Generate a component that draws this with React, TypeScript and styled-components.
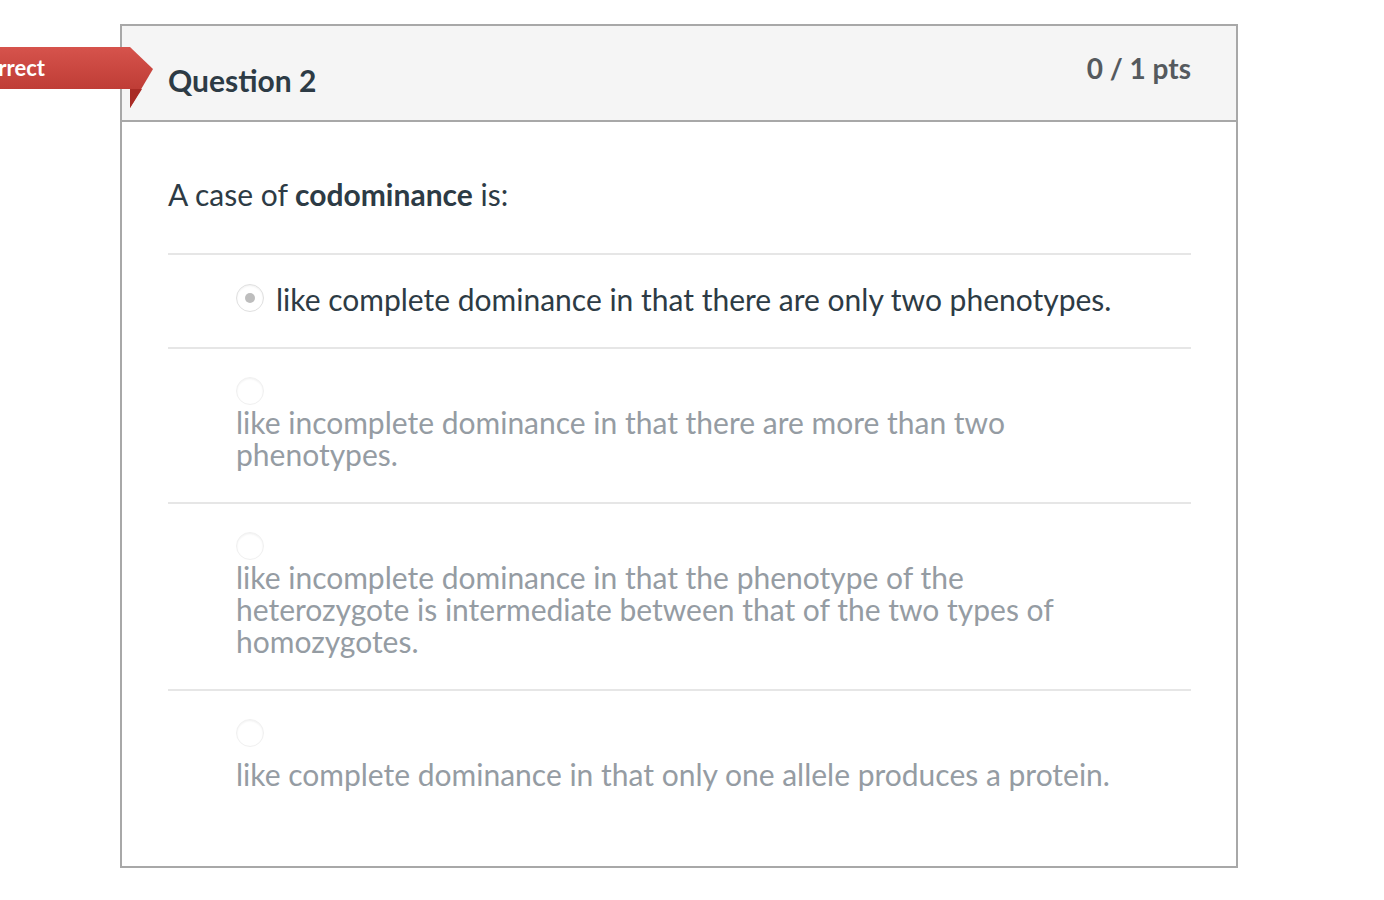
import React from "react";
import styled, { createGlobalStyle } from "styled-components";

const Global = createGlobalStyle`
  html, body { margin: 0; padding: 0; background: #ffffff; }
  body { font-family: Lato, "Open Sans", "Liberation Sans", sans-serif; color: #2d3b45; }
  * { box-sizing: border-box; }
`;

const Page = styled.div`
  position: relative;
  width: 1384px;
  height: 900px;
  padding: 24px 0 0 120px;
  overflow: hidden;
`;

const Card = styled.div`
  width: 1118px;
  height: 844px;
  border: 2px solid #a8a8a8;
  background: #fff;
  display: flex;
  flex-direction: column;
`;

const Header = styled.div`
  height: 96px;
  background: #f5f5f5;
  border-bottom: 2px solid #a8a8a8;
  display: flex;
  justify-content: space-between;
  align-items: flex-start;
  padding: 0 45px 0 46px;
`;

const Title = styled.div`
  font-weight: 700;
  font-size: 30px;
  line-height: 32px;
  padding-top: 38px;
  color: #2d3b45;
`;

const Points = styled.div`
  font-weight: 700;
  font-size: 28px;
  line-height: 32px;
  padding-top: 26px;
  color: #555a5e;
`;

const Body = styled.div`
  padding: 56px 45px 0 46px;
`;

const Prompt = styled.p`
  margin: 0 0 43px;
  font-size: 30px;
  line-height: 32px;
  color: #2d3b45;
  strong { font-weight: 700; }
`;

const Answer = styled.div<{ $first?: boolean; $gap?: number }>`
  border-top: 2px solid #e6e6e6;
  padding: 28px 0 32px 68px;
  display: flex;
  flex-direction: ${(p) => (p.$first ? "row" : "column")};
  align-items: flex-start;
  gap: ${(p) => (p.$first ? 12 : p.$gap ?? 1)}px;
`;

const Radio = styled.span<{ $checked?: boolean; $inline?: boolean }>`
  display: block;
  flex: none;
  width: 28px;
  height: 28px;
  margin-top: ${(p) => (p.$inline ? "1px" : "0")};
  border-radius: 50%;
  border: 1px solid ${(p) => (p.$checked ? "#e0e0e0" : "#f0f0f0")};
  background: #fff;
  box-shadow: inset 0 1px 2px rgba(0, 0, 0, 0.06);
  position: relative;
  &::after {
    content: "";
    display: ${(p) => (p.$checked ? "block" : "none")};
    position: absolute;
    left: 50%;
    top: 50%;
    width: 10px;
    height: 10px;
    margin: -5px 0 0 -5px;
    border-radius: 50%;
    background: #bdbdbd;
  }
`;

const AnswerText = styled.div<{ $selected?: boolean }>`
  font-size: 30px;
  line-height: 32px;
  max-width: 890px;
  color: ${(p) => (p.$selected ? "#2d3b45" : "#959ca3")};
`;

const Banner = styled.div`
  position: absolute;
  left: 0;
  top: 47px;
  display: flex;
  align-items: flex-start;
  z-index: 2;
`;

const BannerBody = styled.div`
  width: 130px;
  height: 42px;
  background: linear-gradient(#d6534c, #bf3d36);
  color: #fff;
  font-weight: 700;
  font-size: 22px;
  line-height: 42px;
  display: flex;
  justify-content: flex-end;
  padding-right: 85px;
  white-space: nowrap;
  overflow: hidden;
`;

const answers = [
  { text: "like incomplete dominance in that there are more than two phenotypes.", gap: 1 },
  {
    text: "like incomplete dominance in that the phenotype of the heterozygote is intermediate between that of the two types of homozygotes.",
    gap: 1,
  },
  { text: "like complete dominance in that only one allele produces a protein.", gap: 11 },
];

export default function App() {
  return (
    <>
      <Global />
      <Page>
        <Banner>
          <BannerBody>Incorrect</BannerBody>
          <svg width="24" height="62" viewBox="0 0 24 62">
            <defs>
              <linearGradient id="rg" x1="0" y1="0" x2="0" y2="1">
                <stop offset="0" stopColor="#d6534c" />
                <stop offset="0.68" stopColor="#bf3d36" />
              </linearGradient>
            </defs>
            <polygon points="0,0 23,22 0,61" fill="url(#rg)" />
            <polygon points="0,42 12,42 0,61" fill="#a92b25" />
          </svg>
        </Banner>
        <Card>
          <Header>
            <Title>Question 2</Title>
            <Points>0 / 1 pts</Points>
          </Header>
          <Body>
            <Prompt>
              A case of <strong>codominance</strong> is:
            </Prompt>
            <Answer $first>
              <Radio $checked $inline />
              <AnswerText $selected>
                like complete dominance in that there are only two phenotypes.
              </AnswerText>
            </Answer>
            {answers.map((a) => (
              <Answer key={a.text} $gap={a.gap}>
                <Radio />
                <AnswerText>{a.text}</AnswerText>
              </Answer>
            ))}
          </Body>
        </Card>
      </Page>
    </>
  );
}
